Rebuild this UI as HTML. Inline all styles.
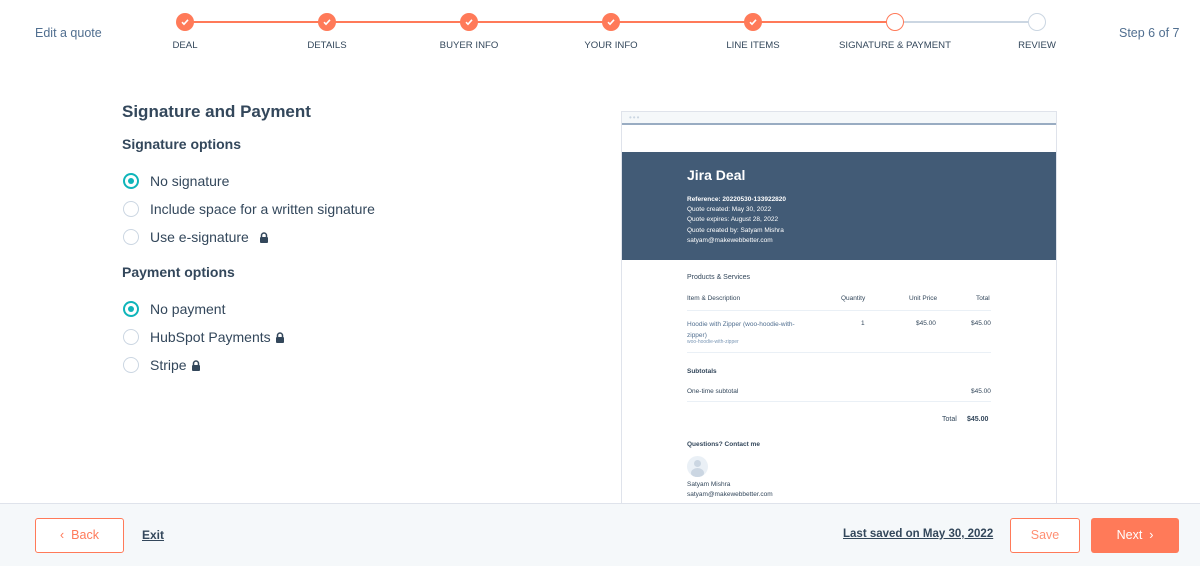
<!DOCTYPE html>
<html><head><style>
*{box-sizing:border-box;margin:0;padding:0}
body{width:1200px;height:566px;overflow:hidden;background:#fff;font-family:"Liberation Sans",sans-serif;color:#33475b;position:relative}
.a{position:absolute}
.step{position:absolute;top:13px;width:18px;height:18px;border-radius:50%;background:#ff7a59}
.step svg{position:absolute;left:4px;top:4px}
.lbl{position:absolute;top:40px;font-size:9.6px;color:#33475b;transform:translateX(-50%);white-space:nowrap}
.radio{position:absolute;width:16px;height:16px;border-radius:50%;border:1.5px solid #cbd6e2;background:#fff}
.radio.on{border:2px solid #0fb5ba}
.radio.on::after{content:"";position:absolute;left:3px;top:3px;width:6px;height:6px;border-radius:50%;background:#0fb5ba}
.opt{position:absolute;left:150px;font-size:14px;color:#33475b}
.lock{display:inline-block;vertical-align:-1px;margin-left:6px}
.p{position:absolute;font-size:6.5px;color:#33475b;white-space:nowrap}
</style></head><body>
<div class="a" style="left:35px;top:26px;font-size:12.5px;color:#516f90">Edit a quote</div>
<div class="a" style="left:1119px;top:26px;font-size:12.5px;color:#516f90">Step 6 of 7</div>
<div class="a" style="left:185px;top:21px;width:710px;height:2px;background:#ff7a59"></div>
<div class="a" style="left:895px;top:21px;width:142px;height:2px;background:#cbd6e2"></div>
<div class="step" style="left:176px"><svg width="10" height="10" viewBox="0 0 10 10"><path d="M2 5.2l2 2 4-4.4" stroke="#fff" stroke-width="1.6" fill="none"/></svg></div>
<div class="step" style="left:318px"><svg width="10" height="10" viewBox="0 0 10 10"><path d="M2 5.2l2 2 4-4.4" stroke="#fff" stroke-width="1.6" fill="none"/></svg></div>
<div class="step" style="left:460px"><svg width="10" height="10" viewBox="0 0 10 10"><path d="M2 5.2l2 2 4-4.4" stroke="#fff" stroke-width="1.6" fill="none"/></svg></div>
<div class="step" style="left:602px"><svg width="10" height="10" viewBox="0 0 10 10"><path d="M2 5.2l2 2 4-4.4" stroke="#fff" stroke-width="1.6" fill="none"/></svg></div>
<div class="step" style="left:744px"><svg width="10" height="10" viewBox="0 0 10 10"><path d="M2 5.2l2 2 4-4.4" stroke="#fff" stroke-width="1.6" fill="none"/></svg></div>
<div class="step" style="left:886px;background:#fff;border:1.5px solid #ff7a59"></div>
<div class="step" style="left:1028px;background:#fff;border:1.5px solid #cbd6e2"></div>
<div class="lbl" style="left:185px">DEAL</div>
<div class="lbl" style="left:327px">DETAILS</div>
<div class="lbl" style="left:469px">BUYER INFO</div>
<div class="lbl" style="left:611px">YOUR INFO</div>
<div class="lbl" style="left:753px">LINE ITEMS</div>
<div class="lbl" style="left:895px">SIGNATURE &amp; PAYMENT</div>
<div class="lbl" style="left:1037px">REVIEW</div>

<div class="a" style="left:122px;top:102px;font-size:17px;font-weight:bold;color:#33475b">Signature and Payment</div>
<div class="a" style="left:122px;top:136px;font-size:14px;font-weight:bold">Signature options</div>
<div class="radio on" style="left:123px;top:173px"></div><div class="opt" style="top:173px">No signature</div>
<div class="radio" style="left:123px;top:201px"></div><div class="opt" style="top:201px">Include space for a written signature</div>
<div class="radio" style="left:123px;top:229px"></div><div class="opt" style="top:229px">Use e-signature <svg class="lock" width="10" height="11" viewBox="0 0 10 11"><path d="M2.5 5V3.5a2.5 2.5 0 015 0V5" stroke="#33475b" stroke-width="1.5" fill="none"/><rect x="1" y="5" width="8" height="6" rx="1" fill="#33475b"/></svg></div>
<div class="a" style="left:122px;top:264px;font-size:14px;font-weight:bold">Payment options</div>
<div class="radio on" style="left:123px;top:301px"></div><div class="opt" style="top:301px">No payment</div>
<div class="radio" style="left:123px;top:329px"></div><div class="opt" style="top:329px">HubSpot Payments<svg class="lock" width="10" height="11" viewBox="0 0 10 11" style="margin-left:4px"><path d="M2.5 5V3.5a2.5 2.5 0 015 0V5" stroke="#33475b" stroke-width="1.5" fill="none"/><rect x="1" y="5" width="8" height="6" rx="1" fill="#33475b"/></svg></div>
<div class="radio" style="left:123px;top:357px"></div><div class="opt" style="top:357px">Stripe<svg class="lock" width="10" height="11" viewBox="0 0 10 11" style="margin-left:4px"><path d="M2.5 5V3.5a2.5 2.5 0 015 0V5" stroke="#33475b" stroke-width="1.5" fill="none"/><rect x="1" y="5" width="8" height="6" rx="1" fill="#33475b"/></svg></div>

<div class="a" style="left:621px;top:111px;width:436px;height:400px;border:1px solid #dfe3eb;border-bottom:none;background:#fff"></div>
<div class="a" style="left:622px;top:112px;width:434px;height:13px;background:#f5f8fa;border-bottom:2px solid #99acc2"></div>
<div class="a" style="left:629px;top:113px;font-size:8px;color:#cbd6e2;letter-spacing:1px">•••</div>
<div class="a" style="left:622px;top:152px;width:434px;height:108px;background:#425b76"></div>
<div class="a" style="left:687px;top:167px;font-size:14px;font-weight:bold;color:#fff">Jira Deal</div>
<div class="p" style="left:687px;top:195px;color:#fff;font-weight:bold;line-height:10.4px">Reference: 20220530-133922820</div>
<div class="p" style="left:687px;top:205px;color:#fff;line-height:10.4px">Quote created: May 30, 2022<br>Quote expires: August 28, 2022<br>Quote created by: Satyam Mishra<br>satyam@makewebbetter.com</div>
<div class="p" style="left:687px;top:274px;font-size:7px">Products &amp; Services</div>
<div class="p" style="left:687px;top:295px">Item &amp; Description</div>
<div class="p" style="left:841px;top:295px">Quantity</div>
<div class="p" style="left:909px;top:295px">Unit Price</div>
<div class="p" style="left:976px;top:295px">Total</div>
<div class="a" style="left:687px;top:310px;width:304px;height:1px;background:#eaf0f6"></div>
<div class="p" style="left:687px;top:320px;line-height:10.5px;color:#516f90">Hoodie with Zipper (woo-hoodie-with-<br>zipper)</div>
<div class="p" style="left:687px;top:339px;font-size:5px;color:#7c98b6">woo-hoodie-with-zipper</div>
<div class="p" style="left:861px;top:320px">1</div>
<div class="p" style="left:916px;top:320px">$45.00</div>
<div class="p" style="left:971px;top:320px">$45.00</div>
<div class="a" style="left:687px;top:352px;width:304px;height:1px;background:#eaf0f6"></div>
<div class="p" style="left:687px;top:368px;font-weight:bold">Subtotals</div>
<div class="p" style="left:687px;top:388px">One-time subtotal</div>
<div class="p" style="left:971px;top:388px">$45.00</div>
<div class="a" style="left:687px;top:401px;width:304px;height:1px;background:#eaf0f6"></div>
<div class="p" style="left:942px;top:416px;font-size:7px">Total</div>
<div class="p" style="left:967px;top:416px;font-size:7px;font-weight:bold">$45.00</div>
<div class="p" style="left:687px;top:441px;font-weight:bold">Questions? Contact me</div>
<div class="a" style="left:687px;top:456px;width:21px;height:21px;border-radius:50%;background:#eaf0f6;overflow:hidden"><div class="a" style="left:7px;top:4px;width:7px;height:7px;border-radius:50%;background:#cbd6e2"></div><div class="a" style="left:4px;top:12px;width:13px;height:10px;border-radius:50%;background:#cbd6e2"></div></div>
<div class="p" style="left:687px;top:481px">Satyam Mishra</div>
<div class="p" style="left:687px;top:491px">satyam@makewebbetter.com</div>

<div class="a" style="left:0;top:503px;width:1200px;height:63px;background:#f5f8fa;border-top:1px solid #dfe3eb"></div>
<div class="a" style="left:35px;top:518px;width:89px;height:35px;border:1px solid #ff7a59;border-radius:3px;background:#fff;color:#ff7a59;font-size:12.5px;text-align:center;line-height:33px">‹&nbsp;&nbsp;Back</div>
<div class="a" style="left:142px;top:528px;font-size:12px;font-weight:bold;text-decoration:underline;color:#33475b">Exit</div>
<div class="a" style="left:843px;top:528px;font-size:11.5px;font-weight:bold;text-decoration:underline;color:#33475b;white-space:nowrap">Last saved on May 30, 2022</div>
<div class="a" style="left:1010px;top:518px;width:70px;height:35px;border:1px solid #ff7a59;border-radius:3px;background:#fff;color:#ff8f73;font-size:12.5px;text-align:center;line-height:33px">Save</div>
<div class="a" style="left:1091px;top:518px;width:88px;height:35px;border-radius:3px;background:#ff7a59;color:#fff;font-size:12.5px;text-align:center;line-height:35px">Next&nbsp;&nbsp;›</div>
</body></html>
